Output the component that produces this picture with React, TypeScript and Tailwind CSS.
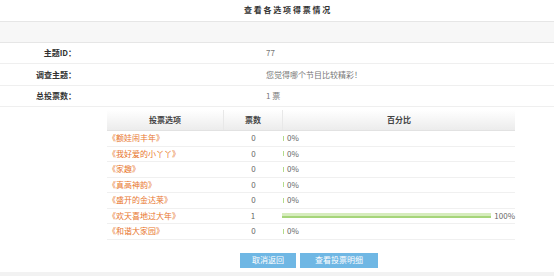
import React from "react";

const rows = [
  { name: "《额娃闹丰年》", votes: 0, pct: 0 },
  { name: "《我好爱的小丫丫》", votes: 0, pct: 0 },
  { name: "《家趣》", votes: 0, pct: 0 },
  { name: "《真高神韵》", votes: 0, pct: 0 },
  { name: "《盛开的金达莱》", votes: 0, pct: 0 },
  { name: "《欢天喜地过大年》", votes: 1, pct: 100 },
  { name: "《和谐大家园》", votes: 0, pct: 0 },
];

const font = { fontFamily: '"SimSun","Noto Sans CJK SC","Liberation Sans",sans-serif' };

export default function App() {
  return (
    <div className="w-[554px] h-[276px] bg-white overflow-hidden text-[8px] text-[#555]" style={font}>
      <div className="h-[21px] flex items-center justify-center pl-[22px] pb-[2px] font-bold text-[8px] tracking-[1.8px] text-[#333]">
        查看各选项得票情况
      </div>
      <div className="h-[22px] bg-[#f7f7f7] border-y border-[#e6e6e6]" />
      <div className="flex h-[21px] border-b border-[#efefef] items-center">
        <div className="w-[76px] text-right font-bold text-[#333]">主题ID：</div>
        <div className="ml-[190px] text-[#777]">77</div>
      </div>
      <div className="flex h-[22px] border-b border-[#efefef] items-center">
        <div className="w-[76px] text-right font-bold text-[#333]">调查主题：</div>
        <div className="ml-[190px] text-[#777]">您觉得哪个节目比较精彩！</div>
      </div>
      <div className="flex h-[21px] border-b border-[#efefef] items-center">
        <div className="w-[76px] text-right font-bold text-[#333]">总投票数：</div>
        <div className="ml-[190px] text-[#777]">1 票</div>
      </div>
      <div className="ml-[107px] w-[408px] mt-[3px]">
        <div className="flex h-[21px] bg-gradient-to-b from-white to-[#ececec] border-b border-[#e2e2e2] font-bold text-[#444]">
          <div className="w-[117px] flex items-center justify-center border-r border-[#e8e8e8]">投票选项</div>
          <div className="w-[59px] flex items-center justify-center border-r border-[#e8e8e8]">票数</div>
          <div className="flex-1 flex items-center justify-center">百分比</div>
        </div>
        {rows.map((r) => (
          <div key={r.name} className="flex h-[15.5px] border-b border-[#f0f0f0] items-center">
            <div className="w-[117px] text-[#e8762d] pl-[1px]">{r.name}</div>
            <div className="w-[59px] text-center text-[#666]">{r.votes}</div>
            <div className="flex-1 flex items-center">
              {r.pct > 0 ? (
                <>
                  <div className="w-[209px] h-[5px] bg-[#d6ecbd] flex flex-col justify-end">
                    <div className="h-[2px] bg-[#a6d57a]" />
                  </div>
                  <span className="ml-[3px] text-[#666]">{r.pct}%</span>
                </>
              ) : (
                <>
                  <div className="w-[1px] h-[5px] bg-[#b5dc8c]" />
                  <span className="ml-[3px] text-[#666]">0%</span>
                </>
              )}
            </div>
          </div>
        ))}
      </div>
      <div className="flex gap-[4px] mt-[13px] ml-[240px]">
        <div className="w-[56px] h-[15px] bg-[#6fb7e4] text-white flex items-center justify-center">取消返回</div>
        <div className="w-[78px] h-[15px] bg-[#6fb7e4] text-white flex items-center justify-center">查看投票明细</div>
      </div>
      <div className="mt-[4px] h-[10px] bg-[#f2f2f2]" />
    </div>
  );
}
